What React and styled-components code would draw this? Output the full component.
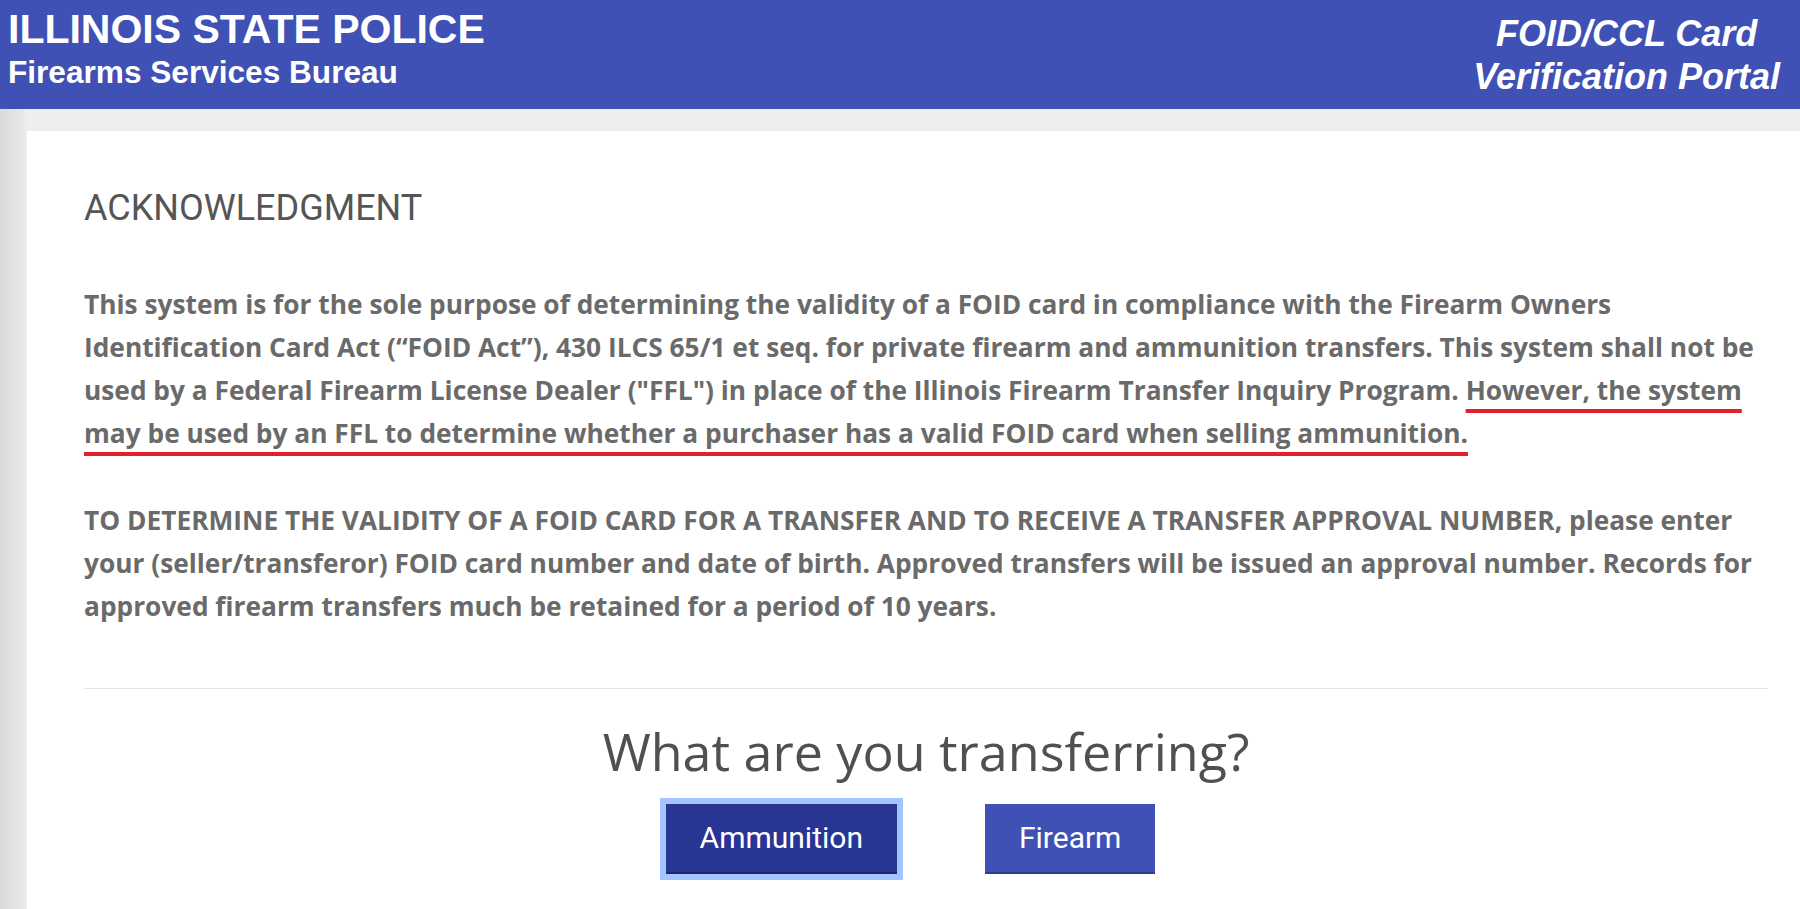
import styled, { createGlobalStyle } from 'styled-components'

const GlobalStyle = createGlobalStyle`
  html, body {
    margin: 0;
    padding: 0;
  }
  body {
    background: #eeeeee;
    font-family: "Open Sans", "Liberation Sans", sans-serif;
    overflow: hidden;
  }
`

const App = () => {
  return (
    <>
      <GlobalStyle />
      <Header>
        <Brand>
          <BrandTitle>ILLINOIS STATE POLICE</BrandTitle>
          <BrandSub>Firearms Services Bureau</BrandSub>
        </Brand>
        <PortalTitle>
          FOID/CCL Card
          <br />
          Verification Portal
        </PortalTitle>
      </Header>

      <Main>
        <Card>
          <SectionTitle>ACKNOWLEDGMENT</SectionTitle>

          <Para>
            This system is for the sole purpose of determining the validity of a FOID card in compliance with the Firearm Owners
            <br />
            Identification Card Act (“FOID Act”), 430 ILCS 65/1 et seq. for private firearm and ammunition transfers. This system shall not be
            <br />
            used by a Federal Firearm License Dealer ("FFL") in place of the Illinois Firearm Transfer Inquiry Program.{' '}
            <Marked>
              However, the system
              <br />
              may be used by an FFL to determine whether a purchaser has a valid FOID card when selling ammunition.
            </Marked>
          </Para>

          <Para $gap={44}>
            TO DETERMINE THE VALIDITY OF A FOID CARD FOR A TRANSFER AND TO RECEIVE A TRANSFER APPROVAL NUMBER, please enter
            <br />
            your (seller/transferor) FOID card number and date of birth. Approved transfers will be issued an approval number. Records for
            <br />
            approved firearm transfers much be retained for a period of 10 years.
          </Para>

          <Divider />

          <Question>What are you transferring?</Question>

          <ChoiceRow>
            <ChoiceButton $active>Ammunition</ChoiceButton>
            <ChoiceButton>Firearm</ChoiceButton>
          </ChoiceRow>
        </Card>
      </Main>
    </>
  )
}

const Header = styled.header`
  height: 109px;
  box-sizing: border-box;
  background: #3f51b5;
  color: #ffffff;
  display: flex;
  justify-content: space-between;
  align-items: flex-start;
  padding: 0 20px 0 8px;
  font-family: "Liberation Sans", Arial, sans-serif;
  font-weight: 700;
`

const Brand = styled.div`
  display: flex;
  flex-direction: column;
  padding-top: 7px;
`

const BrandTitle = styled.div`
  font-size: 41px;
  line-height: 45px;
`

const BrandSub = styled.div`
  margin-top: 2px;
  font-size: 31.6px;
  line-height: 36px;
`

const PortalTitle = styled.div`
  padding-top: 12px;
  font-size: 36px;
  line-height: 43px;
  font-style: italic;
  text-align: center;
`

const Main = styled.main`
  padding: 22px 0 0 27px;
  background: linear-gradient(90deg, #dadada 0, #e8e8e8 22px, #eeeeee 27px);
`

const Card = styled.section`
  background: #ffffff;
  min-height: 760px;
  padding: 58px 32px 0 57px;
`

const SectionTitle = styled.h2`
  margin: 0;
  font-family: Roboto, "Liberation Sans", sans-serif;
  font-weight: 400;
  font-size: 36px;
  line-height: 38px;
  color: #555555;
`

const Para = styled.p`
  margin: ${props => props.$gap || 56}px 0 0;
  font-weight: 700;
  font-size: 26.3px;
  line-height: 43px;
  color: #6a6a6a;
  white-space: nowrap;
`

const Marked = styled.span`
  text-decoration: underline;
  text-decoration-color: #e3202a;
  text-decoration-thickness: 4px;
  text-underline-offset: 9px;
  text-decoration-skip-ink: none;
`

const Divider = styled.hr`
  margin: 60px 0 0;
  border: none;
  border-top: 1px solid #e3e3e3;
`

const Question = styled.h1`
  margin: 31px 0 0;
  font-weight: 400;
  font-size: 52px;
  line-height: 62px;
  color: #505050;
  text-align: center;
`

const ChoiceRow = styled.div`
  display: flex;
  justify-content: center;
  gap: 88px;
  margin-top: 22px;
  padding-right: 31px;
`

const ChoiceButton = styled.button`
  height: 70px;
  padding: 0 34px 2px;
  border: none;
  border-bottom: 2px solid rgba(0, 0, 0, 0.25);
  background: ${props => (props.$active ? '#283593' : '#3f51b5')};
  box-shadow: ${props => (props.$active ? '0 0 0 6px #a4c4ff' : 'none')};
  color: #ffffff;
  font-family: Roboto, "Liberation Sans", sans-serif;
  font-size: 30px;
  cursor: pointer;
`

export default App
